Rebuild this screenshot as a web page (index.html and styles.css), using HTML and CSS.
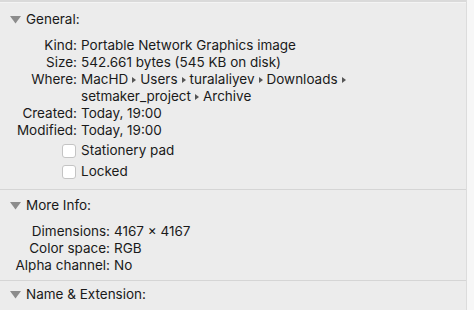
FILE: index.html
```html
<!DOCTYPE html>
<html>
<head>
<meta charset="utf-8">
<link rel="stylesheet" href="styles.css">
</head>
<body>
<div class="window">
  <div class="panel">
    <div class="topband"></div>
    <section class="section general">
      <div class="header">
        <svg class="disclosure" width="11" height="8" viewBox="0 0 11 8"><path d="M0 0 H11 L5.5 7.5 Z" fill="#8c8c8c"/></svg>
        <span>General:</span>
      </div>
      <div class="grid grid-general">
        <div class="label">Kind:</div><div class="value">Portable Network Graphics image</div>
        <div class="label">Size:</div><div class="value">542.661 bytes (545 KB on disk)</div>
        <div class="label">Where:</div>
        <div class="value">MacHD<svg class="crumb" width="4" height="6" viewBox="0 0 4 6"><path d="M0 0 L4 3 L0 6 Z"/></svg>Users<svg class="crumb" width="4" height="6" viewBox="0 0 4 6"><path d="M0 0 L4 3 L0 6 Z"/></svg>turalaliyev<svg class="crumb" width="4" height="6" viewBox="0 0 4 6"><path d="M0 0 L4 3 L0 6 Z"/></svg>Downloads<svg class="crumb" width="4" height="6" viewBox="0 0 4 6"><path d="M0 0 L4 3 L0 6 Z"/></svg><br>setmaker_project<svg class="crumb" width="4" height="6" viewBox="0 0 4 6"><path d="M0 0 L4 3 L0 6 Z"/></svg>Archive</div>
        <div class="label">Created:</div><div class="value">Today, 19:00</div>
        <div class="label">Modified:</div><div class="value">Today, 19:00</div>
        <div class="label check-cell first-check"><span class="checkbox"></span></div><div class="value check-text first-check">Stationery pad</div>
        <div class="label check-cell"><span class="checkbox"></span></div><div class="value check-text">Locked</div>
      </div>
    </section>
    <section class="section more">
      <div class="header">
        <svg class="disclosure" width="11" height="8" viewBox="0 0 11 8"><path d="M0 0 H11 L5.5 7.5 Z" fill="#8c8c8c"/></svg>
        <span>More Info:</span>
      </div>
      <div class="grid grid-more">
        <div class="label">Dimensions:</div><div class="value">4167 × 4167</div>
        <div class="label">Color space:</div><div class="value">RGB</div>
        <div class="label">Alpha channel:</div><div class="value">No</div>
      </div>
    </section>
    <section class="section name">
      <div class="header">
        <svg class="disclosure" width="11" height="8" viewBox="0 0 11 8"><path d="M0 0 H11 L5.5 7.5 Z" fill="#8c8c8c"/></svg>
        <span>Name &amp; Extension:</span>
      </div>
    </section>
  </div>
  <div class="scroll"></div>
</div>
</body>
</html>
```

FILE: styles.css
```css
* { box-sizing: border-box; }
html, body {
  margin: 0;
  padding: 0;
  width: 474px;
  height: 310px;
  overflow: hidden;
  background: #ececec;
}
body {
  font-family: Inter, "Liberation Sans", sans-serif;
  font-size: 13.5px;
  line-height: 17px;
  color: #1a1a1a;
}
.window {
  display: flex;
  height: 310px;
}
.panel {
  flex: 1;
  display: flex;
  flex-direction: column;
  border-right: 1px solid #dcdcdc;
  background: #ececec;
}
.scroll {
  width: 7px;
  background: #f7f7f7;
}
.topband {
  height: 6px;
  background: #dadada;
  border-bottom: 1px solid #f4f4f4;
}
.section {
  padding-top: 8px;
  padding-bottom: 7px;
  border-bottom: 1px solid #d5d5d5;
}
.more {
  padding-top: 7px;
  padding-bottom: 6px;
}
.more .grid { margin-top: 9px; }
.section.name {
  border-bottom: none;
  padding-top: 5px;
}
.header {
  display: flex;
  align-items: center;
  height: 17px;
  padding-left: 10px;
  gap: 5px;
}
.disclosure { display: block; }
.grid {
  display: grid;
  column-gap: 4px;
  margin-top: 9px;
}
.grid-general { grid-template-columns: 77px 1fr; }
.grid-more { grid-template-columns: 110px 1fr; }
.label {
  text-align: right;
  white-space: nowrap;
}
.value { white-space: nowrap; }
.crumb {
  fill: #555555;
  margin: 0 4px 1px 4px;
  vertical-align: middle;
}
.check-cell {
  display: flex;
  justify-content: flex-end;
  align-items: center;
  height: 21px;
  padding-right: 1px;
}
.first-check { margin-top: 1px; }
.check-text { line-height: 21px; }
.checkbox {
  display: block;
  width: 14px;
  height: 14px;
  border-radius: 3px;
  background: #ffffff;
  border: 1px solid #c4c4c4;
}
```
